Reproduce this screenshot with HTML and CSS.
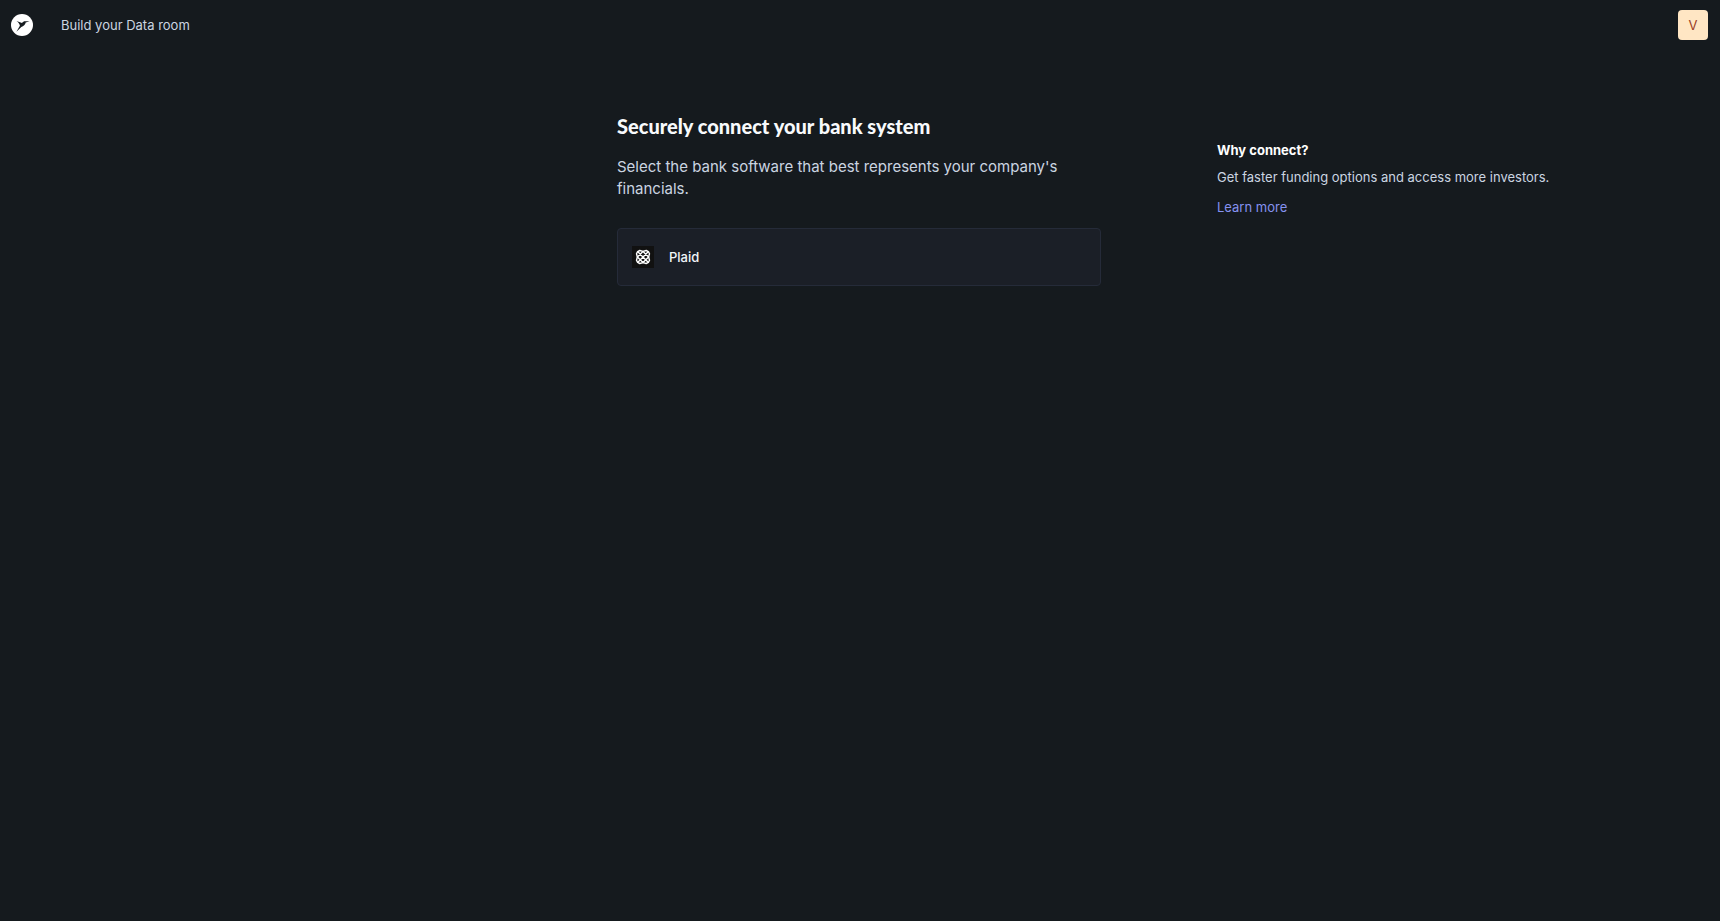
FILE: index.html
```html
<!DOCTYPE html>
<html lang="en">
<head>
  <meta charset="UTF-8" />
  <meta name="viewport" content="width=device-width, initial-scale=1.0"/>
  <title>Build your Data room</title>
  <link rel="stylesheet" href="styles.css">
</head>
<body>
  <header class="topbar">
    <a href="#" class="logo" aria-label="Home">
      <svg width="22" height="22" viewBox="0 0 22 22">
        <circle cx="11" cy="11" r="11" fill="#fff"/>
        <path d="M5.500 7L11 9C12 7.600 13 7.100 14.200 7.200L18.600 7.300L14.700 8.500C14.300 10.700 12.600 12.200 10.300 13L5.400 17.700L8.900 11.700C8.700 10.200 7.400 8.400 5.500 7Z" fill="#161b1f"/>
      </svg>
    </a>
    <span class="topbar-title">Build your Data room</span>
    <button type="button" class="avatar">V</button>
  </header>

  <div class="layout">
    <main class="content">
      <h1>Securely connect your bank system</h1>
      <p class="intro">Select the bank software that best represents your company's financials.</p>
      <button type="button" class="bank">
        <svg width="22" height="22" viewBox="0 0 22 22" fill="none">
          <rect width="22" height="22" fill="#111"/>
          <g stroke="#fff" stroke-width="1.400" stroke-linejoin="round">
            <path d="M7.800 4.500L11 5.400L14.200 4.500L16.400 5.600L17.500 7.800L16.600 11L17.500 14.200L16.400 16.400L14.200 17.500L11 16.600L7.800 17.500L5.600 16.400L4.500 14.200L5.400 11L4.500 7.800L5.600 5.600Z"/>
            <path d="M5.600 5.600L16.400 16.400M16.400 5.600L5.600 16.400M11 5.400L16.600 11L11 16.600L5.400 11Z"/>
          </g>
        </svg>
        <span>Plaid</span>
      </button>
    </main>

    <aside class="help">
      <h2>Why connect?</h2>
      <p>Get faster funding options and access more investors.</p>
      <a href="#">Learn more</a>
    </aside>
  </div>
</body>
</html>
```
FILE: styles.css
```css
* {
  box-sizing: border-box;
}
body {
  margin: 0;
  min-height: 100vh;
  background: #151a1e;
  color: #cbd5e1;
  font-family: Inter, "Liberation Sans", sans-serif;
  font-size: 13px;
  line-height: 20px;
}
h1, h2, p {
  margin: 0;
}
button {
  font: inherit;
  cursor: pointer;
}
svg {
  display: block;
}
.topbar {
  display: flex;
  align-items: center;
  height: 50px;
  padding: 0 12px 0 11px;
}
.topbar-title {
  margin-left: 28px;
}
.avatar {
  width: 30px;
  height: 30px;
  margin-left: auto;
  padding: 0;
  border: 0;
  border-radius: 4px;
  background: #ffe6c4;
  color: #9a3d25;
}
.layout {
  display: grid;
  grid-template-columns: 1fr 484px 1fr;
  column-gap: 116px;
  padding: 62px 2px 0 0;
}
.content {
  grid-column: 2;
}
h1 {
  color: #f8fafc;
  font-family: Lato, Inter, sans-serif;
  font-size: 20px;
  font-weight: 900;
  line-height: 28px;
}
.intro {
  margin-top: 16px;
  font-size: 15px;
  line-height: 22px;
}
.bank {
  display: flex;
  align-items: center;
  gap: 15px;
  width: 100%;
  height: 58px;
  margin-top: 28px;
  padding: 0 14px;
  border: 1px solid #252b39;
  border-radius: 4px;
  background: #1b1f27;
  color: #f1f5f9;
  font-weight: 500;
  text-align: left;
}
.help {
  padding-top: 28px;
}
.help h2 {
  color: #fff;
  font-size: 13px;
  font-weight: 700;
  line-height: 20px;
}
.help p {
  margin: 7px 0 10px;
}
.help a {
  color: #8592f0;
  text-decoration: none;
}
```
